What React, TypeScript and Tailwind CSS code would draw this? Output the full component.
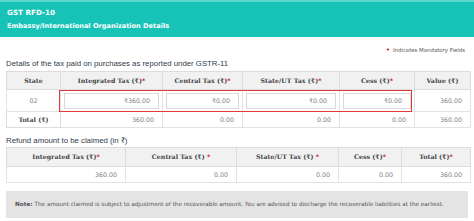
import React from 'react';

const head = "font-['DejaVu_Serif',serif] font-bold text-[6.3px] text-[#444] bg-[#f1f1f1] border border-[#dcdcdc] text-center";
const cell = "font-['DejaVu_Sans',sans-serif] text-[6.3px] text-[#808080] border border-[#e2e2e2] text-right pr-[8px]";

function Star() {
  return <span className="text-[#d0021b]">*</span>;
}

function TaxInput({ value }: { value: string }) {
  return (
    <div className="h-[16px] mx-[3px] border border-[#d8d8d8] bg-white flex items-center justify-end pr-[8px]">
      {value}
    </div>
  );
}

export default function App() {
  const inputs = ['₹360.00', '₹0.00', '₹0.00', '₹0.00'];
  return (
    <div className="w-[474px] h-[221px] overflow-hidden bg-white relative">
      {/* Page header */}
      <div className="h-[37px] bg-[#17c2b6] border-t-[2px] border-[#5ad8cf] pl-[7px] pt-[5px] text-white font-['DejaVu_Sans',sans-serif]">
        <div className="text-[7.2px] font-bold leading-[12px]">GST RFD-10</div>
        <div className="text-[6.6px] font-bold leading-[14px]">Embassy/International Organization Details</div>
      </div>

      <div className="px-[6px]">
        <div className="flex justify-end items-end h-[17px] pr-[3px] font-['DejaVu_Sans',sans-serif] text-[5.4px] text-[#555] leading-[8px]">
          <span className="text-[#d0021b] text-[7px] mr-[3px] leading-[8px]">•</span>
          Indicates Mandatory Fields
        </div>

        <div className="font-['Liberation_Sans',sans-serif] text-[7.8px] text-[#2f3b4a] leading-[10px] mt-[5px]">
          Details of the tax paid on purchases as reported under GSTR-11
        </div>

        {/* Table 1 */}
        <div className="relative mt-[2px]">
          <table className="table-fixed border-collapse w-[464px]">
            <colgroup>
              <col className="w-[54px]" />
              <col className="w-[102px]" />
              <col className="w-[80px]" />
              <col className="w-[97px]" />
              <col className="w-[75px]" />
              <col className="w-[56px]" />
            </colgroup>
            <thead>
              <tr className="h-[18px]">
                <th className={head}>State</th>
                <th className={head}>Integrated Tax (₹)<Star /></th>
                <th className={head}>Central Tax (₹)<Star /></th>
                <th className={head}>State/UT Tax (₹)<Star /></th>
                <th className={head}>Cess (₹)<Star /></th>
                <th className={head}>Value (₹)</th>
              </tr>
            </thead>
            <tbody>
              <tr className="h-[22px]">
                <td className={cell + ' !text-center !pr-0'}>02</td>
                {inputs.map((v, i) => (
                  <td key={i} className={cell + ' !pr-0'}>
                    <TaxInput value={v} />
                  </td>
                ))}
                <td className={cell}>360.00</td>
              </tr>
              <tr className="h-[16px]">
                <td className={head + ' !bg-white'}>Total (₹)</td>
                <td className={cell}>360.00</td>
                <td className={cell}>0.00</td>
                <td className={cell}>0.00</td>
                <td className={cell}>0.00</td>
                <td className={cell}>360.00</td>
              </tr>
            </tbody>
          </table>
          {/* highlight around editable inputs */}
          <div className="absolute left-[53px] top-[19px] w-[353px] h-[22px] border-[1.5px] border-[#e23a3a] pointer-events-none" />
        </div>

        <div className="font-['Liberation_Sans',sans-serif] text-[7.8px] text-[#2f3b4a] leading-[10px] mt-[8px]">
          Refund amount to be claimed (in ₹)
        </div>

        {/* Table 2 */}
        <table className="table-fixed border-collapse w-[464px] mt-[1px]">
          <colgroup>
            <col className="w-[119px]" />
            <col className="w-[111px]" />
            <col className="w-[102px]" />
            <col className="w-[63px]" />
            <col className="w-[69px]" />
          </colgroup>
          <thead>
            <tr className="h-[19px]">
              <th className={head}>Integrated Tax (₹)<Star /></th>
              <th className={head}>Central Tax (₹) <Star /></th>
              <th className={head}>State/UT Tax (₹) <Star /></th>
              <th className={head}>Cess (₹)<Star /></th>
              <th className={head}>Total (₹)<Star /></th>
            </tr>
          </thead>
          <tbody>
            <tr className="h-[16px]">
              <td className={cell}>360.00</td>
              <td className={cell}>0.00</td>
              <td className={cell}>0.00</td>
              <td className={cell}>0.00</td>
              <td className={cell}>360.00</td>
            </tr>
          </tbody>
        </table>

        <div className="mt-[8px] h-[27px] bg-[#e4e4e4] flex items-center pl-[9px] font-['DejaVu_Sans',sans-serif] text-[5.7px] text-[#555]">
          <span className="font-bold mr-[2px]">Note:</span>
          The amount claimed is subject to adjustment of the recoverable amount. You are advised to discharge the recoverable liabilities at the earliest.
        </div>
      </div>
    </div>
  );
}
